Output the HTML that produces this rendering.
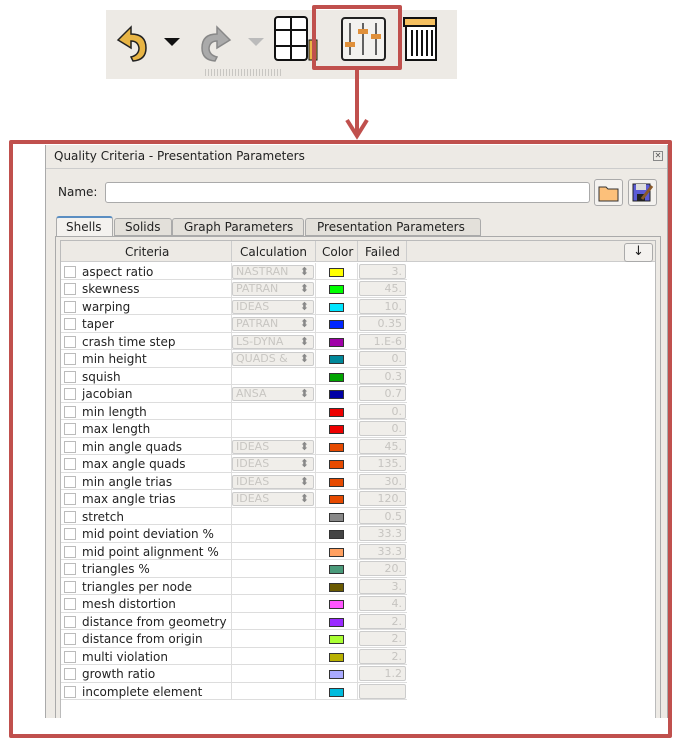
<!DOCTYPE html>
<html><head><style>
*{box-sizing:border-box;margin:0;padding:0}
body{width:679px;height:741px;background:#fff;position:relative;overflow:hidden;font-family:"DejaVu Sans","Liberation Sans",sans-serif;font-size:12px;color:#222}
.a{position:absolute}
.row{position:absolute;left:61px;width:346px;height:17.5px;border-bottom:1px solid #ddd;background:#fff}
.row .cb{position:absolute;left:3px;top:3px;width:12px;height:12px;border:1px solid #bbb;background:#fff}
.row .t{position:absolute;left:21px;top:2px;font-size:12px;white-space:nowrap}
.row .calc{position:absolute;left:171px;top:2px;width:82px;height:14px;border:1px solid #ccc;border-radius:2px;background:#f0eeea;color:#c8c6c2;font-size:11px;line-height:12px;padding-left:3px}
.row .calc:after{content:"⬍";position:absolute;right:4px;top:0;color:#888;font-size:11px}
.row .sw{position:absolute;left:268px;top:5px;width:15px;height:9px;border:1px solid #333}
.row .f{position:absolute;left:298px;top:1px;width:47px;height:15px;border:1px solid #ccc;border-radius:2px;background:#f0eeea;color:#c6c4c0;font-size:11px;text-align:right;padding-right:3px;line-height:13px}
.row .v1{position:absolute;left:170px;top:0;height:17px;border-left:1px solid #ddd}
.row .v2{position:absolute;left:254px;top:0;height:17px;border-left:1px solid #ddd}
.row .v3{position:absolute;left:296px;top:0;height:17px;border-left:1px solid #ddd}
</style></head><body>
<div class="a" style="left:106px;top:10px;width:351px;height:69px;background:#edeae5"></div>
<svg class="a" style="left:106px;top:10px" width="351" height="69">
<path d="M12 30 L25 17 L25 24 Q40 24 40 38 Q40 50 27 51 L25 47 Q33 45 33 38 Q32 31 25 31 L25 38 Z" fill="#e8b545" stroke="#222" stroke-width="1.5"/>
<path d="M58 28 L74 28 L66 36 Z" fill="#111"/>
<path d="M124 30 L111 17 L111 24 Q96 24 96 38 Q96 50 109 51 L111 47 Q103 45 103 38 Q104 31 111 31 L111 38 Z" fill="#aaa" stroke="#888" stroke-width="1.5"/>
<path d="M142 28 L158 28 L150 36 Z" fill="#bbb"/>
<rect x="169" y="7" width="32" height="43" rx="3" fill="#fff" stroke="#111" stroke-width="2"/>
<path d="M185 7 V50 M169 20 H201 M169 36 H201" stroke="#111" stroke-width="2"/>
<rect x="203" y="30" width="8" height="20" fill="#e8b545" stroke="#111"/>
<rect x="236" y="8" width="43" height="42" rx="3" fill="#f3f2ef" stroke="#222" stroke-width="2"/>
<path d="M244 13V45M257 13V45M270 13V45" stroke="#333" stroke-width="1.5"/>
<rect x="239" y="32" width="10" height="5" fill="#e0903a"/><rect x="252" y="19" width="10" height="5" fill="#e0903a"/><rect x="265" y="24" width="10" height="5" fill="#e0903a"/>
<rect x="298" y="8" width="32" height="8" fill="#f5c060" stroke="#111" stroke-width="2"/>
<rect x="300" y="16" width="30" height="34" fill="#fff" stroke="#111" stroke-width="2"/>
<path d="M306 20V46M311 20V46M316 20V46M321 20V46M326 20V46" stroke="#111" stroke-width="2"/>
</svg>
<div class="a" style="left:205px;top:69px;width:76px;height:7px;background:repeating-linear-gradient(90deg,#c8c6c2 0 1px,transparent 1px 3px)"></div>
<div class="a" style="left:312px;top:5px;width:90px;height:65px;border:4px solid #c0504d;border-radius:2px"></div>
<div class="a" style="left:355px;top:70px;width:4px;height:66px;background:#c0504d"></div>
<svg class="a" style="left:343px;top:112px" width="30" height="30"><path d="M4 8 L14 24 L24 8" fill="none" stroke="#c0504d" stroke-width="4"/></svg>
<div class="a" style="left:9px;top:140px;width:663px;height:598px;border:4px solid #c0504d;border-radius:2px"></div>
<div class="a" style="left:45px;top:145px;width:623px;height:573px;background:#edeae5;border-left:1px solid #aaa;border-right:1px solid #aaa"></div>
<div class="a" style="left:46px;top:145px;width:621px;height:24px;border-bottom:1px solid #ccc"></div>
<div class="a" style="left:54px;top:149px;font-size:12px">Quality Criteria - Presentation Parameters</div>
<div class="a" style="left:653px;top:151px;width:10px;height:10px;border:1px solid #888;font-size:8px;line-height:8px;text-align:center;color:#555">✕</div>
<div class="a" style="left:58px;top:185px">Name:</div>
<div class="a" style="left:105px;top:182px;width:485px;height:21px;background:#fff;border:1px solid #aaa;border-radius:3px"></div>
<div class="a" style="left:594px;top:179px;width:29px;height:27px;border:1px solid #aaa;border-radius:3px;background:#f4f2ef"></div>
<svg class="a" style="left:598px;top:184px" width="22" height="18"><path d="M1 3h7l2 2h10v12H1z" fill="#fcc07a" stroke="#333"/></svg>
<div class="a" style="left:628px;top:179px;width:29px;height:27px;border:1px solid #aaa;border-radius:3px;background:#f4f2ef"></div>
<svg class="a" style="left:632px;top:183px" width="22" height="20"><rect x="1" y="1" width="17" height="17" fill="#5b5bd6" stroke="#222"/><rect x="4" y="1" width="10" height="6" fill="#ddd"/><rect x="5" y="11" width="8" height="7" fill="#222"/><path d="M10 16 L20 3" stroke="#8a5a2a" stroke-width="3"/></svg>
<div class="a" style="left:56px;top:216px;width:57px;height:21px;background:#f4f2ef;border:1px solid #aaa;border-top:2px solid #5b8ec2;border-bottom:none;border-radius:3px 3px 0 0;padding:2px 0 0 9px">Shells</div>
<div class="a" style="left:114px;top:218px;width:58px;height:18px;background:#e3e0da;border:1px solid #aaa;border-radius:3px 3px 0 0;padding:1px 0 0 10px">Solids</div>
<div class="a" style="left:172px;top:218px;width:132px;height:18px;background:#e3e0da;border:1px solid #aaa;border-radius:3px 3px 0 0;padding:1px 0 0 11px">Graph Parameters</div>
<div class="a" style="left:305px;top:218px;width:176px;height:18px;background:#e3e0da;border:1px solid #aaa;border-radius:3px 3px 0 0;padding:1px 0 0 11px">Presentation Parameters</div>
<div class="a" style="left:55px;top:236px;width:606px;height:482px;border:1px solid #aaa;border-bottom:none;background:#edeae5"></div>
<div class="a" style="left:60px;top:240px;width:596px;height:478px;border:1px solid #bbb;border-bottom:none;background:#fff"></div>
<div class="a" style="left:61px;top:241px;width:594px;height:21px;background:#edeae5;border-bottom:1px solid #ccc"></div>
<div class="a" style="left:125px;top:245px">Criteria</div>
<div class="a" style="left:231px;top:241px;height:21px;border-left:1px solid #ccc"></div>
<div class="a" style="left:240px;top:245px">Calculation</div>
<div class="a" style="left:315px;top:241px;height:21px;border-left:1px solid #ccc"></div>
<div class="a" style="left:322px;top:245px">Color</div>
<div class="a" style="left:357px;top:241px;height:21px;border-left:1px solid #ccc"></div>
<div class="a" style="left:365px;top:245px">Failed</div>
<div class="a" style="left:406px;top:241px;height:21px;border-left:1px solid #ccc"></div>
<div class="a" style="left:624px;top:243px;width:29px;height:19px;border:1px solid #aaa;border-radius:3px;background:#f4f2ef;text-align:center;font-size:13px;line-height:16px">↓</div>
<div id="rows"></div>
<script>
var d=[["aspect ratio","NASTRAN","#ffff00","3."],["skewness","PATRAN","#00ff00","45."],["warping","IDEAS","#00e5ff","10."],["taper","PATRAN","#0026ff","0.35"],["crash time step","LS-DYNA","#a000a8","1.E-6"],["min height","QUADS &","#00889a","0."],["squish","","#00a400","0.3"],["jacobian","ANSA","#0000a4","0.7"],["min length","","#ee0000","0."],["max length","","#ee0000","0."],["min angle quads","IDEAS","#e64a00","45."],["max angle quads","IDEAS","#e64a00","135."],["min angle trias","IDEAS","#e64a00","30."],["max angle trias","IDEAS","#e64a00","120."],["stretch","","#888888","0.5"],["mid point deviation %","","#444444","33.3"],["mid point alignment %","","#ffa060","33.3"],["triangles %","","#4a9a7a","20."],["triangles per node","","#6a5a00","3."],["mesh distortion","","#ff55ff","4."],["distance from geometry","","#9a2aff","2."],["distance from origin","","#aaff33","2."],["multi violation","","#b8b000","2."],["growth ratio","","#aaaaff","1.2"],["incomplete element","","#00bbdd",""]];
var h="";d.forEach(function(r,i){var y=262.5+i*17.5;h+='<div class="row" style="top:'+y+'px"><div class="cb"></div><div class="t">'+r[0]+'</div><div class="v1"></div><div class="v2"></div><div class="v3"></div>'+(r[1]?'<div class="calc">'+r[1]+'</div>':'')+'<div class="sw" style="background:'+r[2]+'"></div><div class="f">'+r[3]+'</div></div>';});
document.getElementById("rows").innerHTML=h;
</script>
</body></html>
